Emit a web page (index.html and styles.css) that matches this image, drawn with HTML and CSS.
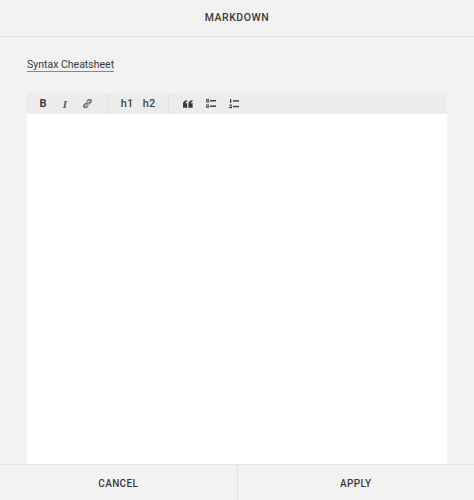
FILE: index.html
```html
<!DOCTYPE html>
<html lang="en">

<head>
    <meta charset="UTF-8">
    <title>Markdown</title>
    <link rel="stylesheet" href="styles.css">
</head>

<body>
    <div class="dialog">
        <div class="title">MARKDOWN</div>
        <div class="content">
            <a class="cheatsheet">Syntax Cheatsheet</a>
            <div class="toolbar">
                <div class="group first">
                    <span class="tool bold">B</span>
                    <span class="tool italic">I</span>
                    <span class="tool">
                        <svg width="9" height="9" viewBox="0 0 10 10" fill="none" stroke="#666" stroke-width="1.5">
                            <path d="M4.4 2.4 5.8 1.1a1.8 1.8 0 0 1 2.9 2.2L7 5.1a1.8 1.8 0 0 1-2.4.2" />
                            <path d="M5.6 7.6 4.2 8.9a1.8 1.8 0 0 1-2.9-2.2L3 4.9a1.8 1.8 0 0 1 2.4-.2" />
                            <path d="M1.5 9 8.5 1" stroke-width="0.8" />
                        </svg>
                    </span>
                </div>
                <div class="group second">
                    <span class="tool heading">h1</span>
                    <span class="tool heading">h2</span>
                </div>
                <div class="group third">
                    <span class="tool">
                        <svg width="10" height="8" viewBox="0 0 11 8" fill="#3a3a3a">
                            <path d="M4.6 0v1.2C3.4 1.5 2.7 2.2 2.6 3.2h2V8H0V3.8C0 1.6 1.8.2 4.6 0Z" />
                            <path d="M10.6 0v1.2C9.4 1.5 8.7 2.2 8.6 3.2h2V8H6V3.8C6 1.6 7.8.2 10.6 0Z" />
                        </svg>
                    </span>
                    <span class="tool">
                        <svg width="10" height="9" viewBox="0 0 10 9" fill="#444">
                            <rect x="0.5" y="0.5" width="2.2" height="2.6" fill="#999" stroke="#555" stroke-width="0.8" />
                            <rect x="0.5" y="5.9" width="2.2" height="2.6" fill="#999" stroke="#555" stroke-width="0.8" />
                            <rect x="4" y="1" width="6" height="1.5" />
                            <rect x="4" y="6.4" width="6" height="1.5" />
                        </svg>
                    </span>
                    <span class="tool">
                        <svg width="10" height="10" viewBox="0 0 10 10" fill="#444">
                            <rect x="1" y="0" width="1.3" height="4" />
                            <rect x="0" y="5.6" width="3" height="1" />
                            <rect x="1.6" y="6.6" width="1.2" height="1.2" />
                            <rect x="0" y="8" width="3" height="1.2" />
                            <rect x="4" y="1.2" width="6" height="1.5" />
                            <rect x="4" y="6.8" width="6" height="1.5" />
                        </svg>
                    </span>
                </div>
            </div>
            <div class="editor"></div>
        </div>
        <div class="actions">
            <div class="action">CANCEL</div>
            <div class="action">APPLY</div>
        </div>
    </div>
</body>

</html>
```

FILE: styles.css
```css
body {
    margin: 0;
    background: #fff;
    font-family: Roboto, "Liberation Sans", Arial, sans-serif;
    color: #3a3a3a;
}

.dialog {
    display: flex;
    flex-direction: column;
    width: 474px;
    height: 500px;
    background: #f2f2f2;
}

.title {
    flex: none;
    height: 36px;
    line-height: 36px;
    border-bottom: 1px solid #e2e2e2;
    text-align: center;
    font-size: 10.5px;
    font-weight: 500;
    letter-spacing: 0.55px;
}

.content {
    flex: 1;
    display: flex;
    flex-direction: column;
    min-height: 0;
    padding: 21px 27px 0;
}

.cheatsheet {
    align-self: flex-start;
    height: 13px;
    line-height: 13px;
    border-bottom: 1px solid #888;
    font-size: 10.5px;
    letter-spacing: 0;
}

.toolbar {
    flex: none;
    display: flex;
    height: 21px;
    margin-top: 21px;
    background: #ececec;
}

.group {
    display: flex;
    align-items: center;
    border-right: 1px solid #e0e0e0;
}

.group.first {
    width: 75px;
    padding-left: 5px;
}

.group.second {
    width: 52px;
    padding-left: 8px;
}

.group.third {
    padding-left: 8px;
    gap: 1px;
    border-right: 0;
}

.tool {
    display: flex;
    align-items: center;
    justify-content: center;
    width: 22px;
    height: 21px;
    font-size: 11px;
}

.bold {
    font-weight: 700;
}

.italic {
    font-family: "Liberation Serif", serif;
    font-style: italic;
    font-weight: 700;
    color: #555;
}

.heading {
    font-weight: 500;
    color: #444;
}

.editor {
    flex: 1;
    background: #fff;
}

.actions {
    flex: none;
    display: flex;
    height: 35px;
    border-top: 1px solid #e6e6e6;
}

.action {
    flex: 1;
    line-height: 37px;
    text-align: center;
    font-size: 10px;
    font-weight: 500;
    letter-spacing: 0.35px;
}

.action + .action {
    border-left: 1px solid #e2e2e2;
}
```
